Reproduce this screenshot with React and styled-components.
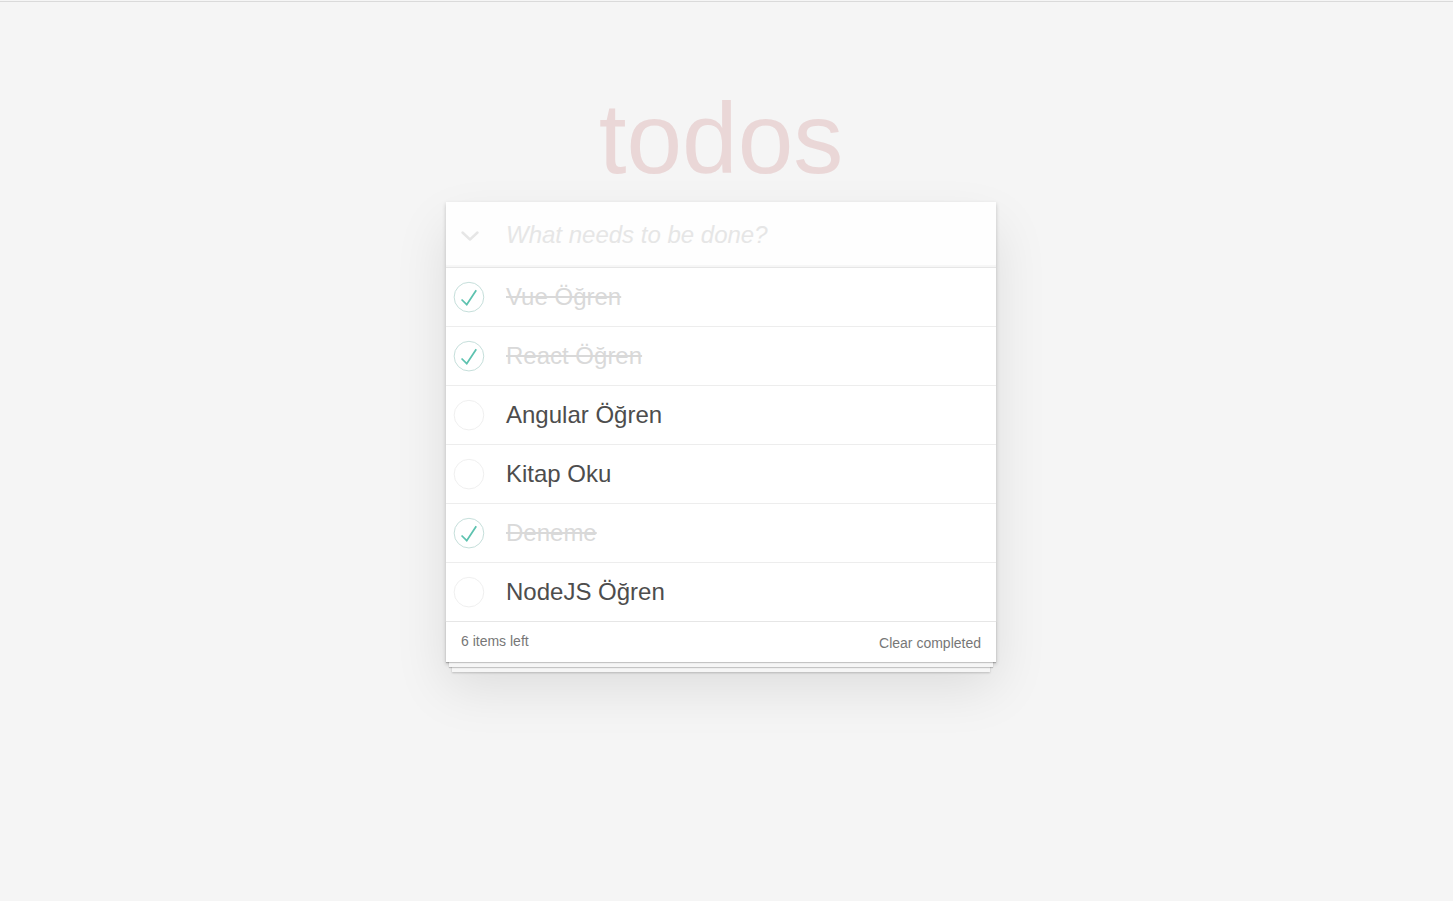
import React from "react";
import styled, { createGlobalStyle } from "styled-components";

const GlobalStyle = createGlobalStyle`
  html, body {
    margin: 0;
    padding: 0;
    background: #f5f5f5;
  }
  body {
    min-height: 100vh;
    color: #4d4d4d;
    font: 14px "Liberation Sans", Arial, Helvetica, sans-serif;
    line-height: 1.4em;
    -webkit-font-smoothing: antialiased;
  }
`;

const TopRule = styled.div`
  height: 1px;
  margin-top: 1px;
  background: #dadada;
`;

const Page = styled.div`
  padding: 86px 11px 120px 0;
`;

const Column = styled.section`
  width: 550px;
  margin: 0 auto;
`;

const Title = styled.h1`
  margin: 0 0 14px;
  font-size: 100px;
  line-height: 100px;
  font-weight: 100;
  text-align: center;
  color: rgba(175, 47, 47, 0.15);
  text-rendering: optimizeLegibility;
`;

const App = styled.div`
  background: #fff;
  box-shadow: 0 2px 4px 0 rgba(0, 0, 0, 0.2), 0 25px 50px 0 rgba(0, 0, 0, 0.1);
`;

const Header = styled.header`
  display: flex;
  align-items: center;
  background: rgba(0, 0, 0, 0.003);
  box-shadow: inset 0 -2px 1px rgba(0, 0, 0, 0.03);
`;

const ToggleAll = styled.span`
  flex: none;
  width: 45px;
  padding-left: 15px;
  margin-top: 3px;
  display: flex;
  align-items: center;
`;

const NewTodo = styled.input`
  flex: 1;
  min-width: 0;
  border: none;
  outline: none;
  background: transparent;
  padding: 16px 16px 16px 0;
  font-family: inherit;
  font-size: 24px;
  line-height: 33px;
  height: 33px;
  color: #4d4d4d;
  &::placeholder {
    font-style: italic;
    font-weight: 300;
    color: #e6e6e6;
  }
`;

const List = styled.ul`
  margin: 0;
  padding: 0;
  list-style: none;
  border-top: 1px solid #e6e6e6;
`;

const Item = styled.li`
  display: flex;
  align-items: center;
  font-size: 24px;
  border-bottom: 1px solid #ededed;
  &:last-child {
    border-bottom: none;
  }
`;

const ToggleBox = styled.span`
  flex: none;
  width: 60px;
  height: 40px;
  display: flex;
  align-items: center;
`;

const Label = styled.label`
  flex: 1;
  padding: 15px 15px 15px 0;
  line-height: 28px;
  word-break: break-all;
  color: ${(p) => (p.done ? "#d9d9d9" : "#4d4d4d")};
  text-decoration: ${(p) => (p.done ? "line-through" : "none")};
`;

const Footer = styled.footer`
  display: flex;
  justify-content: space-between;
  align-items: center;
  height: 20px;
  padding: 10px 15px;
  color: #777;
  border-top: 1px solid #e6e6e6;
  box-shadow: 0 1px 1px rgba(0, 0, 0, 0.2), 0 8px 0 -3px #f6f6f6,
    0 9px 1px -3px rgba(0, 0, 0, 0.2), 0 16px 0 -6px #f6f6f6,
    0 17px 2px -6px rgba(0, 0, 0, 0.2);
`;

const Count = styled.span`
  text-align: left;
`;

const ClearButton = styled.button`
  border: none;
  background: none;
  padding: 0;
  margin-top: 2px;
  font: inherit;
  line-height: 20px;
  color: inherit;
  cursor: pointer;
`;

const Chevron = () => (
  <svg width="18" height="10" viewBox="0 0 18 10">
    <path
      d="M1.5 1.5 L9 8.5 L16.5 1.5"
      fill="none"
      stroke="#e6e6e6"
      strokeWidth="2.4"
      strokeLinecap="round"
      strokeLinejoin="round"
    />
  </svg>
);

const Toggle = ({ done }) => (
  <svg width="40" height="40" viewBox="-10 -18 100 135">
    <circle
      cx="50"
      cy="50"
      r="50"
      fill="none"
      stroke={done ? "#bddad5" : "#ededed"}
      strokeWidth="3"
    />
    {done && <path fill="#5dc2af" d="M72 25L42 71 27 56l-4 4 20 20 34-52z" />}
  </svg>
);

const todos = [
  { id: 1, title: "Vue Öğren", done: true },
  { id: 2, title: "React Öğren", done: true },
  { id: 3, title: "Angular Öğren", done: false },
  { id: 4, title: "Kitap Oku", done: false },
  { id: 5, title: "Deneme", done: true },
  { id: 6, title: "NodeJS Öğren", done: false },
];

const TodoApp = () => (
  <>
    <GlobalStyle />
    <TopRule />
    <Page>
      <Column>
        <Title>todos</Title>
        <App>
          <Header>
            <ToggleAll>
              <Chevron />
            </ToggleAll>
            <NewTodo placeholder="What needs to be done?" />
          </Header>
          <List>
            {todos.map((todo) => (
              <Item key={todo.id}>
                <ToggleBox>
                  <Toggle done={todo.done} />
                </ToggleBox>
                <Label done={todo.done}>{todo.title}</Label>
              </Item>
            ))}
          </List>
          <Footer>
            <Count>6 items left</Count>
            <ClearButton>Clear completed</ClearButton>
          </Footer>
        </App>
      </Column>
    </Page>
  </>
);

export default TodoApp;
